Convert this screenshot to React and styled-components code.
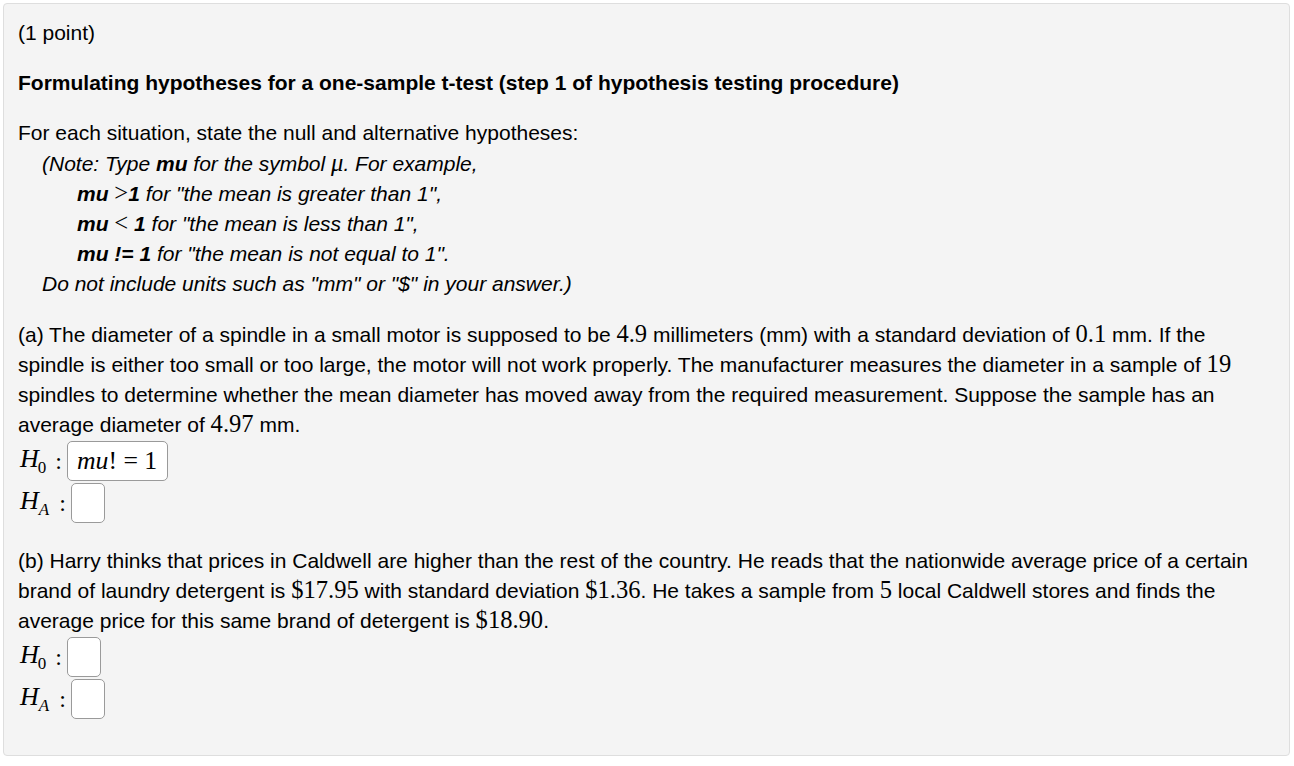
import React from "react";
import styled, { createGlobalStyle } from "styled-components";

const GlobalStyle = createGlobalStyle`
  body {
    margin: 0;
    background: #fff;
    font-family: "Liberation Sans", Arial, sans-serif;
    color: #000;
  }
`;

const Panel = styled.div`
  margin: 3px 4px 12px 3px;
  background: #f4f4f4;
  border: 1px solid #dedede;
  border-radius: 4px;
  padding: 14px 14px 35px 14px;
  font-size: 21px;
  line-height: 30px;
`;

const Para = styled.div`
  margin-top: ${(p) => p.$top || 0}px;
  font-weight: ${(p) => (p.$bold ? "bold" : "normal")};
`;

const Note = styled.div`
  margin-top: 1px;
  margin-left: 24px;
  font-style: italic;
`;

const NoteLine = styled.div`
  padding-left: ${(p) => p.$indent || 0}px;
`;

const M = styled.span`
  font-family: "Liberation Serif", "Times New Roman", serif;
  font-size: 1.17em;
  line-height: 1;
  font-style: ${(p) => (p.$italic ? "italic" : "normal")};
  font-weight: normal;
`;

const AnswerRow = styled.div`
  display: flex;
  align-items: center;
  height: 42px;
  margin-left: 2px;
`;

const Label = styled.span`
  font-family: "Liberation Serif", "Times New Roman", serif;
  font-size: 26px;
  line-height: 1;
  font-style: italic;
  white-space: nowrap;
`;

const Sub = styled.span`
  display: inline-block;
  font-size: 17px;
  font-style: ${(p) => (p.$italic ? "italic" : "normal")};
  vertical-align: -6px;
  margin-left: ${(p) => p.$ml || 0}px;
`;

const Colon = styled.span`
  font-family: "Liberation Serif", "Times New Roman", serif;
  font-size: 24px;
  line-height: 1;
  margin: 0 ${(p) => p.$mr || 4}px 0 ${(p) => p.$ml || 8}px;
`;

const AnswerBox = styled.div`
  box-sizing: border-box;
  min-width: 34px;
  height: 40px;
  background: #fff;
  border: 1px solid #9a9a9a;
  border-radius: 5px;
  padding: 0 10px 0 9px;
  display: flex;
  align-items: center;
  font-family: "Liberation Serif", "Times New Roman", serif;
  font-size: 22px;
`;

const Hyp = ({ sub, italicSub, ml, mr, children }) => (
  <AnswerRow>
    <Label>
      H
      <Sub $italic={italicSub} $ml={italicSub ? 0 : -1}>
        {sub}
      </Sub>
    </Label>
    <Colon $ml={ml} $mr={mr}>:</Colon>
    <AnswerBox>{children}</AnswerBox>
  </AnswerRow>
);

export default function App() {
  return (
    <>
      <GlobalStyle />
      <Panel>
        <Para>(1 point)</Para>
        <Para $top={20} $bold>
          Formulating hypotheses for a one-sample t-test (step 1 of hypothesis
          testing procedure)
        </Para>
        <Para $top={20}>
          For each situation, state the null and alternative hypotheses:
        </Para>
        <Note>
          <NoteLine>
            (Note: Type <b>mu</b> for the symbol <M $italic>μ</M>. For example,
          </NoteLine>
          <NoteLine $indent={35}>
            <b>mu</b> <M>&gt;</M>
            <b>1</b> for "the mean is greater than 1",
          </NoteLine>
          <NoteLine $indent={35}>
            <b>mu</b> <M>&lt;</M> <b>1</b> for "the mean is less than 1",
          </NoteLine>
          <NoteLine $indent={35}>
            <b>mu != 1</b> for "the mean is not equal to 1".
          </NoteLine>
          <NoteLine>Do not include units such as "mm" or "$" in your answer.)</NoteLine>
        </Note>
        <Para $top={21}>
          (a) The diameter of a spindle in a small motor is supposed to be{" "}
          <M>4.9</M> millimeters (mm) with a standard deviation of <M>0.1</M>{" "}
          mm. If the spindle is either too small or too large, the motor will
          not work properly. The manufacturer measures the diameter in a sample
          of <M>19</M> spindles to determine whether the mean diameter has moved
          away from the required measurement. Suppose the sample has an average
          diameter of <M>4.97</M> mm.
        </Para>
        <Hyp sub="0" ml={9} mr={5}>
          <M $italic>mu</M>
          <M>!&nbsp;=&nbsp;1</M>
        </Hyp>
        <Hyp sub="A" italicSub ml={10} mr={5} />
        <Para $top={22}>
          (b) Harry thinks that prices in Caldwell are higher than the rest of
          the country. He reads that the nationwide average price of a certain
          brand of laundry detergent is <M>$17.95</M> with standard deviation{" "}
          <M>$1.36</M>. He takes a sample from <M>5</M> local Caldwell stores
          and finds the average price for this same brand of detergent is{" "}
          <M>$18.90</M>.
        </Para>
        <Hyp sub="0" ml={9} mr={5} />
        <Hyp sub="A" italicSub ml={10} mr={5} />
      </Panel>
    </>
  );
}
